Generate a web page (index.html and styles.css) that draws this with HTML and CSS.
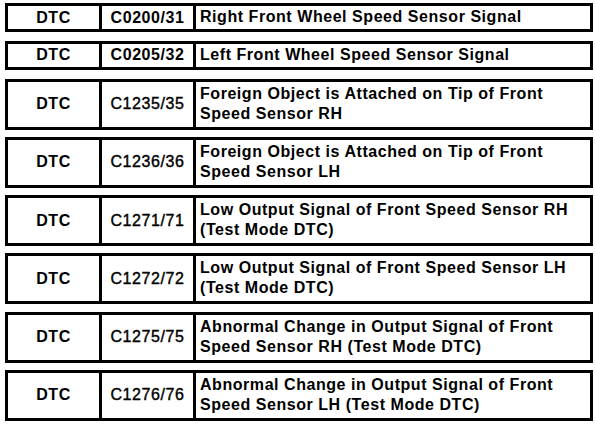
FILE: index.html
```html
<!DOCTYPE html>
<html>
<head>
<meta charset="utf-8">
<link rel="stylesheet" href="styles.css">
</head>
<body>
<div class="list">
  <div class="row">
    <div class="cell cell--center">DTC</div>
    <div class="cell cell--center">C0200/31</div>
    <div class="cell cell--desc">Right Front Wheel Speed Sensor Signal</div>
  </div>
  <div class="row">
    <div class="cell cell--center">DTC</div>
    <div class="cell cell--center">C0205/32</div>
    <div class="cell cell--desc">Left Front Wheel Speed Sensor Signal</div>
  </div>
  <div class="row row--tall">
    <div class="cell cell--center">DTC</div>
    <div class="cell cell--center cell--code">C1235/35</div>
    <div class="cell cell--desc">Foreign Object is Attached on Tip of Front<br>Speed Sensor RH</div>
  </div>
  <div class="row row--tall">
    <div class="cell cell--center">DTC</div>
    <div class="cell cell--center cell--code">C1236/36</div>
    <div class="cell cell--desc">Foreign Object is Attached on Tip of Front<br>Speed Sensor LH</div>
  </div>
  <div class="row row--tall">
    <div class="cell cell--center">DTC</div>
    <div class="cell cell--center cell--code">C1271/71</div>
    <div class="cell cell--desc">Low Output Signal of Front Speed Sensor RH<br>(Test Mode DTC)</div>
  </div>
  <div class="row row--tall">
    <div class="cell cell--center">DTC</div>
    <div class="cell cell--center cell--code">C1272/72</div>
    <div class="cell cell--desc">Low Output Signal of Front Speed Sensor LH<br>(Test Mode DTC)</div>
  </div>
  <div class="row row--tall">
    <div class="cell cell--center">DTC</div>
    <div class="cell cell--center cell--code">C1275/75</div>
    <div class="cell cell--desc">Abnormal Change in Output Signal of Front<br>Speed Sensor RH (Test Mode DTC)</div>
  </div>
  <div class="row row--tall">
    <div class="cell cell--center">DTC</div>
    <div class="cell cell--center cell--code">C1276/76</div>
    <div class="cell cell--desc">Abnormal Change in Output Signal of Front<br>Speed Sensor LH (Test Mode DTC)</div>
  </div>
</div>
</body>
</html>
```

FILE: styles.css
```css
html, body {
  margin: 0;
  padding: 0;
  background: #fff;
}

body {
  padding: 3px 0 0 5px;
  font-family: "Liberation Sans", Arial, sans-serif;
  font-weight: bold;
  font-size: 16px;
  color: #000;
}

.list {
  display: flex;
  flex-direction: column;
  gap: 7.25px;
  width: 588px;
}

.row {
  display: grid;
  grid-template-columns: 91px 91px 1fr;
  column-gap: 3px;
  background: #000;
  border: 3px solid #000;
  height: 29px;
  margin-bottom: 1.5px;
  box-sizing: border-box;
}

.row--tall {
  height: 51px;
  margin-bottom: 0;
}

.cell {
  background: #fff;
  display: flex;
  align-items: center;
  line-height: 20px;
  letter-spacing: 0.55px;
  white-space: nowrap;
}

.cell--center {
  justify-content: center;
}

.cell--code {
  font-weight: normal;
  letter-spacing: 0.6px;
  -webkit-text-stroke: 0.4px #000;
}

.cell--desc {
  padding-left: 4px;
  padding-bottom: 1px;
}
```
